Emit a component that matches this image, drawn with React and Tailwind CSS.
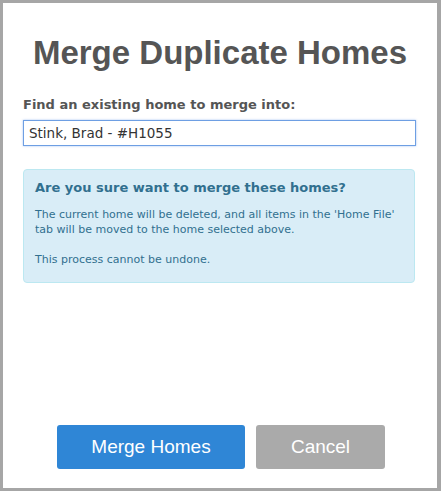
export default function App() {
    return (
        <div className="w-[441px] h-[491px] bg-white border-[#a6a6a6] border-t-[3px] border-l-[3px] border-b-[3px] border-r-[4px] flex flex-col">
            <h1 className="text-center text-[33px] font-bold text-[#555555] pt-[30px] leading-[40px] font-['Liberation_Sans',Arial,sans-serif]">
                Merge Duplicate Homes
            </h1>
            <div className="px-[20px] mt-[24px] font-['DejaVu_Sans',Verdana,sans-serif]">
                <label className="block text-[13px] font-bold text-[#555555] leading-[16px]">
                    Find an existing home to merge into:
                </label>
                <input
                    defaultValue="Stink, Brad - #H1055"
                    className="mt-[7px] w-[393px] h-[26px] border border-[#6e9fe3] shadow-[0_0_2px_rgba(102,150,233,0.6)] px-[5px] text-[13.5px] text-[#333333] outline-none"
                />
                <div className="mt-[23px] w-[392px] h-[114px] rounded-[4px] bg-[#d9edf7] border border-[#bce8f1] text-[#31708f] px-[11px] pt-[10px]">
                    <div className="text-[13px] font-bold leading-[16px]">
                        Are you sure want to merge these homes?
                    </div>
                    <p className="mt-[11px] text-[11px] leading-[15px]">
                        The current home will be deleted, and all items in the 'Home File' tab will be moved to the home selected above.
                    </p>
                    <p className="mt-[15px] text-[11px] leading-[15px]">
                        This process cannot be undone.
                    </p>
                </div>
            </div>
            <div className="mt-auto mb-[19px] pl-[2px] flex justify-center gap-[11px] font-['Liberation_Sans',Arial,sans-serif]">
                <button className="w-[188px] h-[44px] rounded-[3px] bg-[#2f86d6] text-white text-[19px]">
                    Merge Homes
                </button>
                <button className="w-[129px] h-[44px] rounded-[3px] bg-[#aaaaaa] text-white text-[19px]">
                    Cancel
                </button>
            </div>
        </div>
    );
}
